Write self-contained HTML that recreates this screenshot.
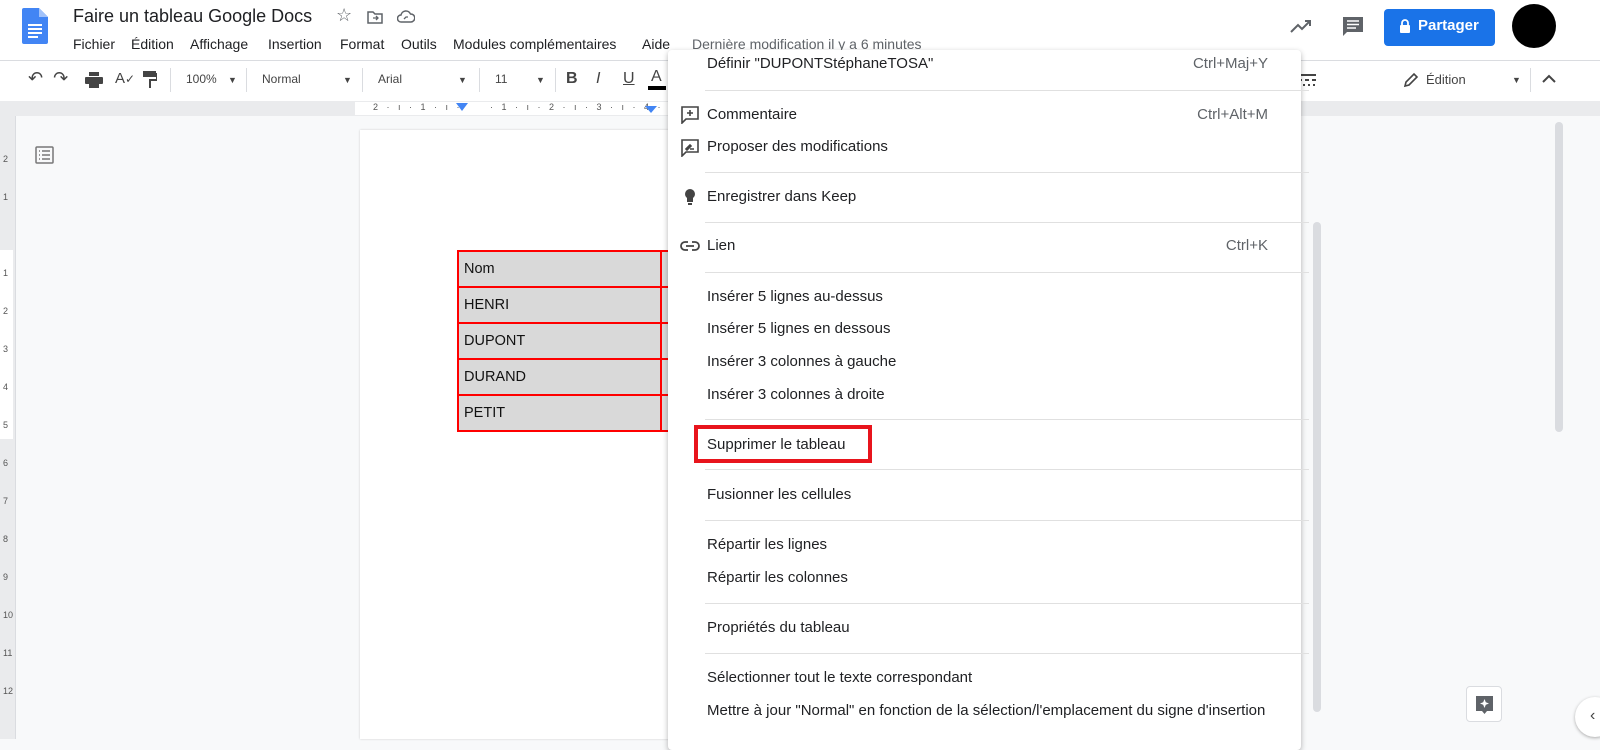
<!DOCTYPE html>
<html><head><meta charset="utf-8"><style>
*{margin:0;padding:0;box-sizing:border-box}
body{width:1600px;height:739px;overflow:hidden;background:#f8f9fa;font-family:"Liberation Sans",sans-serif;position:relative;color:#202124}
.a{position:absolute}
.menu span{position:absolute;font-size:15px;color:#202124;white-space:nowrap;margin-top:-1px}
.sc{color:#5f6368!important;right:33px;text-align:right}
.sep{position:absolute;left:37px;right:-8px;height:1px;background:#e0e0e0}
.mb{font-size:14px;top:36px;color:#202124}
.tb{font-size:12px;color:#444;top:72px}
td{border:2px solid #f00;background:#d9d9d9;height:36px;font-size:14.5px;padding-left:5px;color:#111}
</style></head><body>
<!-- header -->
<div class="a" style="left:0;top:0;width:1600px;height:60px;background:#fff"></div>
<svg class="a" style="left:22px;top:8px" width="26" height="36" viewBox="0 0 26 36"><path d="M2 0h15l9 9v25a2 2 0 0 1-2 2H2a2 2 0 0 1-2-2V2a2 2 0 0 1 2-2z" fill="#4285f4"/><path d="M17 0l9 9h-9z" fill="#a1c2fa"/><rect x="6" y="16" width="14" height="2" fill="#fff"/><rect x="6" y="20" width="14" height="2" fill="#fff"/><rect x="6" y="24" width="14" height="2" fill="#fff"/><rect x="6" y="28" width="10" height="2" fill="#fff"/></svg>
<div class="a" style="left:73px;top:6px;font-size:18px;color:#202124">Faire un tableau Google Docs</div>
<div class="a" style="left:336px;top:5px;font-size:18px;color:#5f6368">☆</div>
<svg class="a" style="left:367px;top:10px" width="16" height="14"><path d="M1 2h5l2 2h7v9H1z" fill="none" stroke="#5f6368" stroke-width="1.5"/><path d="M6 8h5M9 6l2 2-2 2" stroke="#5f6368" fill="none" stroke-width="1.3"/></svg>
<svg class="a" style="left:397px;top:10px" width="18" height="14"><path d="M4 12a3.5 3.5 0 0 1 0-7 5 5 0 0 1 9.5-1A4 4 0 0 1 14 12z" fill="none" stroke="#5f6368" stroke-width="1.5"/><path d="M7 9l2-2 2 0" stroke="#5f6368" fill="none" stroke-width="1.3"/></svg>
<div class="a mb" style="left:73px">Fichier</div>
<div class="a mb" style="left:131px">Édition</div>
<div class="a mb" style="left:190px">Affichage</div>
<div class="a mb" style="left:268px">Insertion</div>
<div class="a mb" style="left:340px">Format</div>
<div class="a mb" style="left:401px">Outils</div>
<div class="a mb" style="left:453px">Modules complémentaires</div>
<div class="a mb" style="left:642px">Aide</div>
<div class="a mb" style="left:692px;color:#5f6368;text-decoration:underline">Dernière modification il y a 6 minutes</div>
<svg class="a" style="left:1290px;top:18px" width="22" height="16"><path d="M1 14l7-7 4 4 8-8M15 3h5v5" fill="none" stroke="#5f6368" stroke-width="2"/></svg>
<svg class="a" style="left:1342px;top:16px" width="22" height="22"><path d="M1 1h20v15H5l-4 4z" fill="#5f6368"/><path d="M5 5h12M5 8.5h12M5 12h9" stroke="#fff" stroke-width="1.6"/></svg>
<div class="a" style="left:1384px;top:9px;width:111px;height:37px;background:#1a73e8;border-radius:4px;color:#fff;font-size:15px;font-weight:bold;padding:8px 0 0 34px">Partager</div>
<svg class="a" style="left:1399px;top:19px" width="12" height="15"><rect x="1" y="6" width="10" height="8" rx="1" fill="#fff"/><path d="M3 6V4a3 3 0 0 1 6 0v2" fill="none" stroke="#fff" stroke-width="1.8"/></svg>
<div class="a" style="left:1512px;top:4px;width:44px;height:44px;border-radius:50%;background:#000"></div>
<!-- toolbar -->
<div class="a" style="left:0;top:60px;width:1600px;height:1px;background:#dadce0"></div>
<div class="a" style="left:0;top:61px;width:1600px;height:40px;background:#fff"></div>
<div class="a" style="left:28px;top:68px;font-size:18px;color:#444;letter-spacing:10px">↶↷</div>
<svg class="a" style="left:85px;top:72px" width="18" height="16"><rect x="4" y="0" width="10" height="4" fill="#444"/><rect x="0" y="5" width="18" height="7" rx="1" fill="#444"/><rect x="4" y="10" width="10" height="6" fill="#444"/></svg>
<div class="a" style="left:115px;top:70px;font-size:15px;color:#444">A<span style="font-size:12px">✓</span></div>
<svg class="a" style="left:143px;top:71px" width="14" height="18"><rect x="0" y="0" width="13" height="6" fill="#444"/><path d="M12 3h2v6H7v8" fill="none" stroke="#444" stroke-width="2"/></svg>
<div class="a" style="left:170px;top:68px;width:1px;height:24px;background:#dadce0"></div>
<div class="a tb" style="left:186px">100%</div><div class="a tb" style="left:228px;font-size:9px;top:75px">▼</div>
<div class="a" style="left:246px;top:68px;width:1px;height:24px;background:#dadce0"></div>
<div class="a tb" style="left:262px">Normal</div><div class="a tb" style="left:343px;font-size:9px;top:75px">▼</div>
<div class="a" style="left:362px;top:68px;width:1px;height:24px;background:#dadce0"></div>
<div class="a tb" style="left:378px">Arial</div><div class="a tb" style="left:458px;font-size:9px;top:75px">▼</div>
<div class="a" style="left:479px;top:68px;width:1px;height:24px;background:#dadce0"></div>
<div class="a tb" style="left:495px">11</div><div class="a tb" style="left:536px;font-size:9px;top:75px">▼</div>
<div class="a" style="left:555px;top:68px;width:1px;height:24px;background:#dadce0"></div>
<div class="a" style="left:566px;top:70px;font-size:16px;font-weight:bold;color:#444">B</div>
<div class="a" style="left:596px;top:70px;font-size:16px;font-style:italic;color:#444">I</div>
<div class="a" style="left:623px;top:70px;font-size:16px;text-decoration:underline;color:#444">U</div>
<div class="a" style="left:651px;top:68px;font-size:16px;color:#444">A</div>
<div class="a" style="left:648px;top:86px;width:18px;height:4px;background:#000"></div>
<svg class="a" style="left:1298px;top:74px" width="18" height="12"><path d="M0 1h18M0 6h4M7 6h4M14 6h4M0 11h2M5 11h2M10 11h2M15 11h2" stroke="#444" stroke-width="2"/></svg>
<svg class="a" style="left:1403px;top:72px" width="16" height="16"><path d="M2 14l1-4 8-8 3 3-8 8z" fill="none" stroke="#444" stroke-width="1.6"/></svg>
<div class="a" style="left:1426px;top:72px;font-size:13px;color:#444">Édition</div>
<div class="a" style="left:1512px;top:75px;font-size:9px;color:#444">▼</div>
<div class="a" style="left:1530px;top:68px;width:1px;height:24px;background:#dadce0"></div>
<svg class="a" style="left:1542px;top:74px" width="14" height="9"><path d="M1 8l6-6 6 6" fill="none" stroke="#444" stroke-width="2"/></svg>
<!-- ruler -->
<div class="a" style="left:0;top:101px;width:1600px;height:15px;background:#eaebed"></div>
<div class="a" style="left:355px;top:102px;width:313px;height:13px;background:#fff;font-size:9px;color:#555;letter-spacing:3px;padding-left:18px;white-space:nowrap;overflow:hidden">2 · ı · 1 · ı ·&nbsp;&nbsp;&nbsp;&nbsp; · 1 · ı · 2 · ı · 3 · ı · 4 · ı · 5</div>
<div class="a" style="left:456px;top:103px;width:0;height:0;border-left:6px solid transparent;border-right:6px solid transparent;border-top:8px solid #4285f4"></div>
<div class="a" style="left:645px;top:106px;width:0;height:0;border-left:6px solid transparent;border-right:6px solid transparent;border-top:7px solid #4285f4"></div>
<div class="a" style="left:0;top:116px;width:15px;height:623px;background:#eaebed"></div>
<div class="a" style="left:0;top:250px;width:13px;height:189px;background:#fff"></div>
<div class="a" style="left:15px;top:116px;width:1px;height:623px;background:#dadce0"></div>
<div class="a" style="left:3px;top:140px;font-size:9px;color:#555;line-height:38px;width:10px">2<br>1<br><br>1<br>2<br>3<br>4<br>5<br>6<br>7<br>8<br>9<br>10<br>11<br>12</div>
<svg class="a" style="left:35px;top:146px" width="19" height="18"><rect x="1" y="1" width="17" height="16" rx="1" fill="none" stroke="#777" stroke-width="1.5"/><path d="M4 5h1M7 5h8M4 9h1M7 9h8M4 13h1M7 13h8" stroke="#777" stroke-width="1.5"/></svg>
<!-- page -->
<div class="a" style="left:360px;top:130px;width:320px;height:609px;background:#fff;box-shadow:0 0 2px #ccc"></div>
<table class="a" style="left:457px;top:250px;border-collapse:collapse;width:220px">
<tr><td style="width:203px">Nom</td><td></td></tr><tr><td>HENRI</td><td></td></tr><tr><td>DUPONT</td><td></td></tr><tr><td>DURAND</td><td></td></tr><tr><td>PETIT</td><td></td></tr></table>
<!-- right -->
<div class="a" style="left:1555px;top:122px;width:8px;height:310px;background:#dadce0;border-radius:4px"></div>
<div class="a" style="left:1466px;top:686px;width:36px;height:36px;background:#fff;border:1px solid #dadce0;border-radius:4px"></div>
<svg class="a" style="left:1475px;top:695px" width="19" height="20"><path d="M1 1h17v15h-6l-2.5 3-2.5-3H1z" fill="#5f6368"/><path d="M9.5 4l1.3 3.2 3.2 1.3-3.2 1.3-1.3 3.2-1.3-3.2L5 8.5l3.2-1.3z" fill="#fff"/></svg>
<div class="a" style="left:1575px;top:697px;width:40px;height:40px;border-radius:50%;background:#fff;box-shadow:0 1px 3px #aaa;font-size:16px;color:#444;padding:10px 0 0 15px">‹</div>
<!-- menu -->
<div class="a menu" style="left:668px;top:50px;width:633px;height:700px;background:#fff;border-radius:4px;box-shadow:0 2px 6px rgba(0,0,0,.3)">
<span style="left:39px;top:6px">Définir "DUPONTStéphaneTOSA"</span><span class="sc" style="top:6px">Ctrl+Maj+Y</span>
<div class="sep" style="top:40px"></div>
<span style="left:39px;top:57px">Commentaire</span><span class="sc" style="top:57px">Ctrl+Alt+M</span>
<span style="left:39px;top:89px">Proposer des modifications</span>
<div class="sep" style="top:122px"></div>
<span style="left:39px;top:139px">Enregistrer dans Keep</span>
<div class="sep" style="top:172px"></div>
<span style="left:39px;top:188px">Lien</span><span class="sc" style="top:188px">Ctrl+K</span>
<div class="sep" style="top:222px"></div>
<span style="left:39px;top:239px">Insérer 5 lignes au-dessus</span>
<span style="left:39px;top:271px">Insérer 5 lignes en dessous</span>
<span style="left:39px;top:304px">Insérer 3 colonnes à gauche</span>
<span style="left:39px;top:337px">Insérer 3 colonnes à droite</span>
<div class="sep" style="top:369px"></div>
<div style="position:absolute;left:26px;top:375px;width:178px;height:38px;border:4px solid #e8141c"></div>
<span style="left:39px;top:387px">Supprimer le tableau</span>
<div class="sep" style="top:419px"></div>
<span style="left:39px;top:437px">Fusionner les cellules</span>
<div class="sep" style="top:470px"></div>
<span style="left:39px;top:487px">Répartir les lignes</span>
<span style="left:39px;top:520px">Répartir les colonnes</span>
<div class="sep" style="top:553px"></div>
<span style="left:39px;top:570px">Propriétés du tableau</span>
<div class="sep" style="top:603px"></div>
<span style="left:39px;top:620px">Sélectionner tout le texte correspondant</span>
<span style="left:39px;top:653px">Mettre à jour "Normal" en fonction de la sélection/l'emplacement du signe d'insertion</span>
<div style="position:absolute;left:645px;top:172px;width:8px;height:490px;background:#dadce0;border-radius:4px"></div>
<svg style="position:absolute;left:13px;top:56px" width="18" height="18"><path d="M1 1h16v12H5l-4 4z" fill="none" stroke="#444" stroke-width="1.6"/><path d="M9 4v6M6 7h6" stroke="#444" stroke-width="1.6"/></svg>
<svg style="position:absolute;left:13px;top:89px" width="18" height="18"><path d="M1 1h16v12H5l-4 4z" fill="none" stroke="#444" stroke-width="1.6"/><path d="M5 10l4-4 1 1-4 4zM9 10h4" stroke="#444" stroke-width="1.6"/></svg>
<svg style="position:absolute;left:16px;top:138px" width="12" height="18"><circle cx="6" cy="6" r="5" fill="#444"/><rect x="3" y="9" width="6" height="5" fill="#444"/><rect x="4" y="15" width="4" height="2" fill="#444"/></svg>
<svg style="position:absolute;left:12px;top:190px" width="20" height="12"><path d="M8 2H5a4 4 0 0 0 0 8h3M12 2h3a4 4 0 0 1 0 8h-3M6 6h8" fill="none" stroke="#444" stroke-width="1.8"/></svg>
</div>
</body></html>
